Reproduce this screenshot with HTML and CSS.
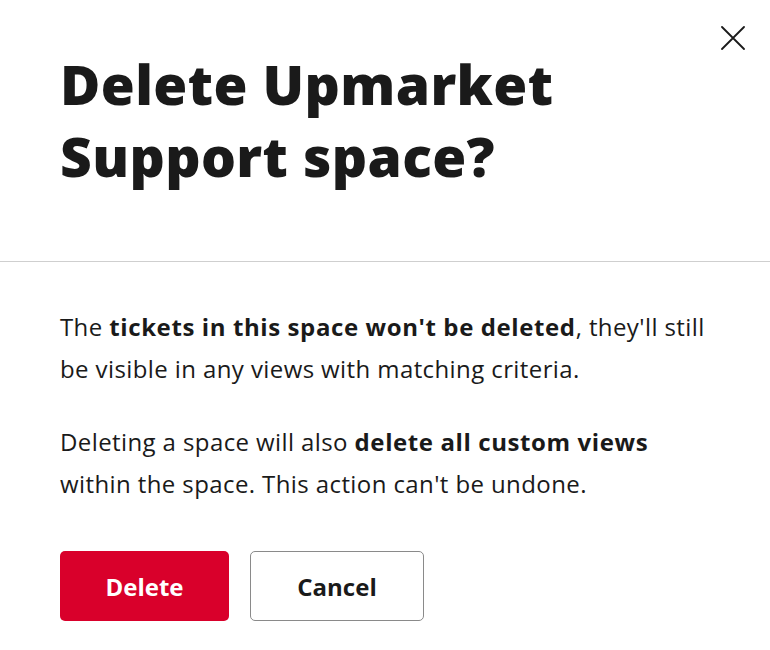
FILE: index.html
```html
<!DOCTYPE html>
<html lang="en">
<head>
<meta charset="utf-8">
<title>Delete space</title>
<link rel="stylesheet" href="styles.css">
</head>
<body>
<div class="modal">
  <header class="modal-header">
    <h1 class="modal-title">Delete Upmarket Support space?</h1>
    <button class="close-btn" aria-label="Close">
      <svg width="24" height="24" viewBox="0 0 24 24" fill="none" stroke="#1a1a1a" stroke-width="1.8" stroke-linecap="round">
        <path d="M1 1 L23 23 M23 1 L1 23"/>
      </svg>
    </button>
  </header>
  <section class="modal-body">
    <p class="para">The <strong>tickets in this space won't be deleted</strong>, they'll still be visible in any views with matching criteria.</p>
    <p class="para">Deleting a space will also <strong>delete all custom views</strong> within the space. This action can't be undone.</p>
    <div class="actions">
      <button class="btn btn-danger">Delete</button>
      <button class="btn btn-secondary">Cancel</button>
    </div>
  </section>
</div>
</body>
</html>
```

FILE: styles.css
```css
* { box-sizing: border-box; }
html, body {
  margin: 0;
  padding: 0;
  background: #ffffff;
}
body {
  font-family: "Open Sans", "Lato", sans-serif;
  color: #1a1a1a;
}
.modal {
  width: 770px;
  height: 650px;
  background: #fff;
}
.modal-header {
  position: relative;
  padding: 48px 60px 69px 60px;
  border-bottom: 1px solid #cfcfcf;
}
.modal-title {
  margin: 0;
  font-size: 55px;
  line-height: 72px;
  font-weight: 800;
  letter-spacing: 0.4px;
  max-width: 560px;
}
.close-btn {
  position: absolute;
  top: 26px;
  right: 25px;
  width: 24px;
  height: 24px;
  padding: 0;
  border: none;
  background: none;
  cursor: pointer;
  display: flex;
}
.modal-body {
  padding: 44px 60px 0 60px;
}
.para {
  margin: 0 0 31px 0;
  font-size: 24px;
  line-height: 42px;
  font-weight: 400;
  letter-spacing: 0.4px;
}
.para strong {
  font-weight: 700;
  letter-spacing: 0.6px;
}
.actions {
  display: flex;
  gap: 21px;
  margin-top: 46px;
}
.btn {
  height: 70px;
  font-family: "Open Sans", sans-serif;
  font-size: 24px;
  font-weight: 700;
  border-radius: 5px;
  cursor: pointer;
}
.btn-danger {
  width: 169px;
  background: #d9002b;
  color: #fff;
  border: none;
}
.btn-secondary {
  width: 174px;
  background: #fff;
  color: #1a1a1a;
  border: 1px solid #8a8a8a;
}
```
